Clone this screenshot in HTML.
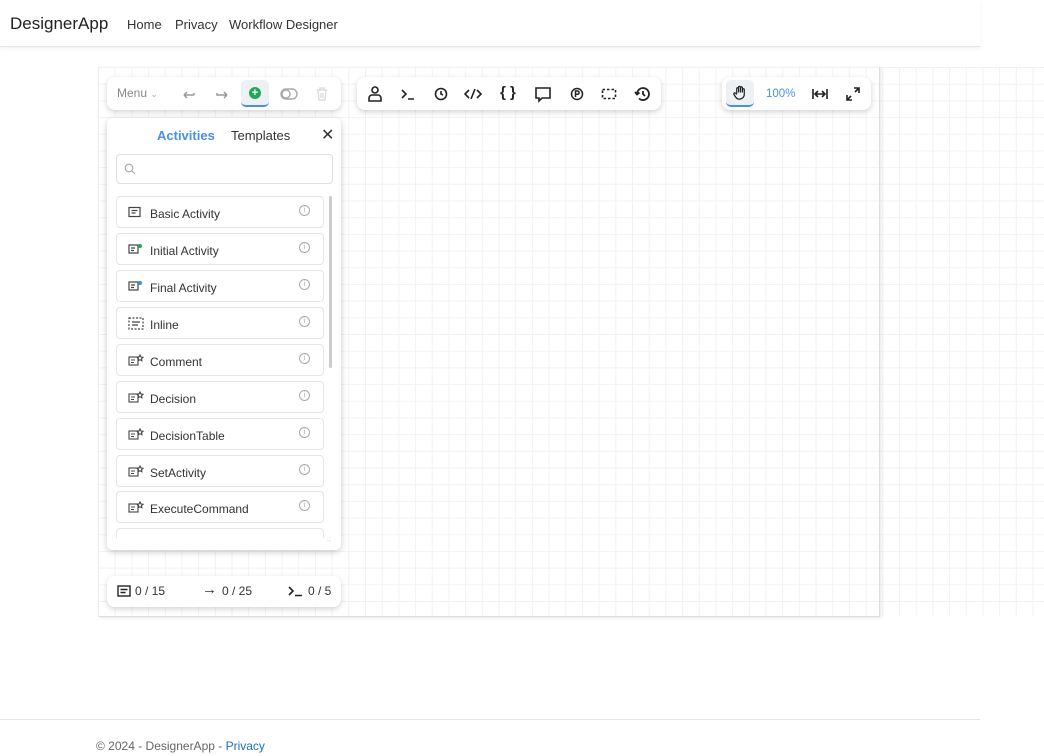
<!DOCTYPE html>
<html><head><meta charset="utf-8"><style>
*{box-sizing:border-box;margin:0;padding:0}
body{width:1044px;height:756px;overflow:hidden;background:#fff;font-family:"Liberation Sans",sans-serif;color:#212529;position:relative}
.hdr{position:absolute;left:0;top:0;width:980px;height:47px;border-bottom:1px solid #e5e5e5;box-shadow:0 2px 4px rgba(0,0,0,.05)}
.brand{position:absolute;left:10px;top:14px;font-size:17px;color:#222}
.nav{position:absolute;top:17px;font-size:13px;color:#333}
.grid{position:absolute;left:98px;top:67px;width:946px;height:549px;
background-image:linear-gradient(to right,#f0f2f4 1px,transparent 1px),linear-gradient(to bottom,#f0f2f4 1px,transparent 1px);
background-size:16.7px 16.7px;background-position:0 0}
.canvas{position:absolute;left:98px;top:67px;width:782px;height:550px;border-right:1px solid #ddd;border-bottom:1px solid #ddd;border-left:1px solid #eee;box-shadow:1px 1px 3px rgba(0,0,0,.1)}
.bar{position:absolute;background:#fff;border-radius:8px;box-shadow:0 2px 6px rgba(0,0,0,.18)}
.ic{position:absolute;top:8px}
.panel{position:absolute;left:107px;top:118px;width:234px;height:432px;background:#fff;border-radius:6px;box-shadow:0 2px 7px rgba(0,0,0,.2)}
.item{position:absolute;left:9px;width:208px;height:32px;border:1px solid #e3e5e8;border-radius:4px;font-size:12px;color:#333}
.item span{position:absolute;left:33px;top:10px}
.item svg.a{position:absolute;left:11px;top:9px}
.item .i{position:absolute;right:13px;top:8px;width:11px;height:11px;border:1px solid #aaa;border-radius:50%;font-size:7px;color:#aaa;text-align:center;line-height:9px}
.foot{position:absolute;left:0;top:719px;width:980px;border-top:1px solid #e5e5e5}
</style></head><body>
<div class="hdr"><div class="brand">DesignerApp</div>
<div class="nav" style="left:127px">Home</div><div class="nav" style="left:175px">Privacy</div><div class="nav" style="left:229px">Workflow Designer</div></div>
<div class="grid"></div>
<div class="canvas"></div>

<div class="bar" style="left:107px;top:77px;width:234px;height:33px">
<div style="position:absolute;left:10px;top:9px;font-size:12px;color:#888">Menu <span style="font-size:9px;color:#aaa">&#8964;</span></div>
<svg class="ic" style="left:73px" width="18" height="18" viewBox="0 0 18 18" fill="none" stroke="#999" stroke-width="1.5"><path d="M4 10h10M4 10l3-3M4 10l3 3M14 10v-2"/></svg>
<svg class="ic" style="left:106px" width="18" height="18" viewBox="0 0 18 18" fill="none" stroke="#999" stroke-width="1.5"><path d="M4 8v2h10M14 10l-3-3M14 10l-3 3"/></svg>
<div style="position:absolute;left:134px;top:3px;width:28px;height:27px;background:#eef1f3;border-radius:5px;border-bottom:2px solid #4a90e2"></div>
<div style="position:absolute;left:142px;top:10px;width:12px;height:12px;border-radius:50%;background:#22a85a;color:#fff;font-size:11px;line-height:12px;text-align:center;font-weight:bold">+</div>
<svg class="ic" style="left:172px" width="20" height="18" viewBox="0 0 20 18" fill="none" stroke="#aaa" stroke-width="1.4"><rect x="2" y="4" width="16" height="10" rx="5"/><circle cx="7" cy="9" r="4"/></svg>
<svg class="ic" style="left:207px" width="16" height="18" viewBox="0 0 16 18" fill="none" stroke="#ddd" stroke-width="1.4"><path d="M3 5h10M6 5V3h4v2M4 5l1 10h6l1-10M7 8v5M9 8v5"/></svg>
</div>

<div class="bar" style="left:357px;top:77px;width:304px;height:33px">
<svg class="ic" style="left:9px" width="18" height="18" viewBox="0 0 18 18" fill="none" stroke="#222" stroke-width="1.6"><circle cx="9" cy="5" r="3"/><path d="M3 16v-3a3 3 0 0 1 3-3h6a3 3 0 0 1 3 3v3z"/></svg>
<svg class="ic" style="left:42px" width="18" height="18" viewBox="0 0 18 18" fill="none" stroke="#222" stroke-width="1.6"><path d="M3 5l4 4-4 4M9 14h6"/></svg>
<svg class="ic" style="left:75px" width="18" height="18" viewBox="0 0 18 18" fill="none" stroke="#222" stroke-width="1.6"><circle cx="9" cy="9" r="5.5"/><path d="M9 6v3l2 1"/></svg>
<svg class="ic" style="left:106px" width="20" height="18" viewBox="0 0 20 18" fill="none" stroke="#222" stroke-width="1.6"><path d="M6 5L2 9l4 4M14 5l4 4-4 4M12 4l-4 10"/></svg>
<div style="position:absolute;left:143px;top:7px;font-size:15px;font-weight:bold;color:#222">{ }</div>
<svg class="ic" style="left:177px" width="18" height="18" viewBox="0 0 18 18" fill="none" stroke="#222" stroke-width="1.6"><path d="M2 3h14v10H8l-3 3v-3H2z"/></svg>
<svg class="ic" style="left:211px" width="18" height="18" viewBox="0 0 18 18" fill="none" stroke="#222" stroke-width="1.5"><circle cx="9" cy="9" r="5.5"/><path d="M7.5 12V6h2a1.6 1.6 0 0 1 0 3.3h-2"/></svg>
<svg class="ic" style="left:243px" width="18" height="18" viewBox="0 0 18 18" fill="none" stroke="#222" stroke-width="1.6" stroke-dasharray="2.5 2"><rect x="2.5" y="4.5" width="13" height="9"/></svg>
<svg class="ic" style="left:276px" width="20" height="18" viewBox="0 0 20 18" fill="none" stroke="#222" stroke-width="1.8"><path d="M4 9a6 6 0 1 1 2 4.5M2 7l2 2.5 2.5-2M10 6v3l2 2"/></svg>
</div>

<div class="bar" style="left:722px;top:77px;width:149px;height:33px">
<div style="position:absolute;left:4px;top:3px;width:28px;height:27px;background:#eef1f3;border-radius:5px;border-bottom:2px solid #4a90e2"></div>
<svg class="ic" style="left:10px;top:7px" width="17" height="17" viewBox="0 0 18 18" fill="none" stroke="#222" stroke-width="1.3"><path d="M5 10V5a1 1 0 0 1 2 0v4M7 9V3.5a1 1 0 0 1 2 0V9M9 9V4a1 1 0 0 1 2 0v5M11 9V6a1 1 0 0 1 2 0v5a5 5 0 0 1-5 5h-1a4 4 0 0 1-3-2l-2-3a1 1 0 0 1 2-1l1 1"/></svg>
<div style="position:absolute;left:44px;top:11px;font-size:11.5px;color:#4a90e2">100%</div>
<svg class="ic" style="left:88px" width="20" height="18" viewBox="0 0 20 18" fill="none" stroke="#222" stroke-width="1.6"><path d="M3 4v10M17 4v10M5 9h10M8 6l-3 3 3 3M12 6l3 3-3 3"/></svg>
<svg class="ic" style="left:122px" width="18" height="18" viewBox="0 0 18 18" fill="none" stroke="#222" stroke-width="1.6"><path d="M10 3h5v5M15 3l-4 4M8 15H3v-5M3 15l4-4"/></svg>
</div>

<div class="panel">
<div style="position:absolute;left:50px;top:10px;font-size:13px;color:#4a90e2;font-weight:bold">Activities</div>
<div style="position:absolute;left:124px;top:10px;font-size:13px;color:#333">Templates</div>
<div style="position:absolute;left:214px;top:7px;font-size:16px;color:#333">✕</div>
<div style="position:absolute;left:9px;top:36px;width:217px;height:30px;border:1px solid #dcdfe3;border-radius:4px">
<svg style="position:absolute;left:7px;top:8px" width="12" height="12" viewBox="0 0 12 12" fill="none" stroke="#aaa" stroke-width="1.1"><circle cx="5" cy="5" r="3.8"/><path d="M8 8l3 3"/></svg></div>
<div style="position:absolute;left:222px;top:78px;width:3px;height:172px;background:#ccc;border-radius:2px"></div>
<div class="item" style="top:78px"><svg class="a" width="13" height="12" viewBox="0 0 13 12" fill="none" stroke="#444" stroke-width="1.2"><rect x="1" y="1.5" width="11" height="9"/><path d="M3.5 4.5h6M3.5 7h4"/></svg><span>Basic Activity</span><div class="i">i</div></div>
<div class="item" style="top:115px"><svg class="a" width="15" height="12" viewBox="0 0 15 12" fill="none" stroke="#444" stroke-width="1.2"><rect x="1" y="2" width="9" height="8"/><path d="M3 5h4M3 7.5h3"/><circle cx="12" cy="3" r="2" fill="#22a85a" stroke="none"/></svg><span>Initial Activity</span><div class="i">i</div></div>
<div class="item" style="top:152px"><svg class="a" width="15" height="12" viewBox="0 0 15 12" fill="none" stroke="#444" stroke-width="1.2"><rect x="1" y="2" width="9" height="8"/><path d="M3 5h4M3 7.5h3"/><circle cx="12" cy="3" r="2" fill="#3b8fd9" stroke="none"/></svg><span>Final Activity</span><div class="i">i</div></div>
<div class="item" style="top:189px"><svg class="a" width="16" height="13" viewBox="0 0 16 13" fill="none" stroke="#444" stroke-width="1.2" ><rect x="1" y="1" width="14" height="11" stroke-dasharray="2 1.5"/><path d="M4 5h8M4 8h6"/></svg><span>Inline</span><div class="i">i</div></div>
<div class="item" style="top:226px"><svg class="a" width="16" height="13" viewBox="0 0 16 13" fill="none" stroke="#444" stroke-width="1.1"><rect x="1" y="3" width="9" height="8"/><path d="M3 6h4M3 8.5h3M12 1l1 2 2 .3-1.5 1.4.4 2-1.9-1-1.9 1 .4-2L9 3.3l2-.3z"/></svg><span>Comment</span><div class="i">i</div></div>
<div class="item" style="top:263px"><svg class="a" width="16" height="13" viewBox="0 0 16 13" fill="none" stroke="#444" stroke-width="1.1"><rect x="1" y="3" width="9" height="8"/><path d="M3 6h4M3 8.5h3M12 1l1 2 2 .3-1.5 1.4.4 2-1.9-1-1.9 1 .4-2L9 3.3l2-.3z"/></svg><span>Decision</span><div class="i">i</div></div>
<div class="item" style="top:300px"><svg class="a" width="16" height="13" viewBox="0 0 16 13" fill="none" stroke="#444" stroke-width="1.1"><rect x="1" y="3" width="9" height="8"/><path d="M3 6h4M3 8.5h3M12 1l1 2 2 .3-1.5 1.4.4 2-1.9-1-1.9 1 .4-2L9 3.3l2-.3z"/></svg><span>DecisionTable</span><div class="i">i</div></div>
<div class="item" style="top:337px"><svg class="a" width="16" height="13" viewBox="0 0 16 13" fill="none" stroke="#444" stroke-width="1.1"><rect x="1" y="3" width="9" height="8"/><path d="M3 6h4M3 8.5h3M12 1l1 2 2 .3-1.5 1.4.4 2-1.9-1-1.9 1 .4-2L9 3.3l2-.3z"/></svg><span>SetActivity</span><div class="i">i</div></div>
<div class="item" style="top:373px"><svg class="a" width="16" height="13" viewBox="0 0 16 13" fill="none" stroke="#444" stroke-width="1.1"><rect x="1" y="3" width="9" height="8"/><path d="M3 6h4M3 8.5h3M12 1l1 2 2 .3-1.5 1.4.4 2-1.9-1-1.9 1 .4-2L9 3.3l2-.3z"/></svg><span>ExecuteCommand</span><div class="i">i</div></div>
<div style="position:absolute;left:9px;top:410px;width:208px;height:10px;border:1px solid #e3e5e8;border-bottom:none;border-radius:4px 4px 0 0"></div>
<div style="position:absolute;left:220px;top:418px;font-size:7px;color:#bbb">.:</div>
</div>

<div class="bar" style="left:107px;top:576px;width:234px;height:31px;font-size:12px;color:#333">
<svg style="position:absolute;left:10px;top:9px" width="14" height="12" viewBox="0 0 14 12" fill="none" stroke="#222" stroke-width="1.4"><rect x="1" y="1" width="12" height="10"/><path d="M3.5 4.5h7M3.5 7.5h5"/></svg>
<div style="position:absolute;left:28px;top:8px">0 / 15</div>
<div style="position:absolute;left:95px;top:5px;font-size:15px;font-weight:bold">→</div>
<div style="position:absolute;left:115px;top:8px">0 / 25</div>
<svg style="position:absolute;left:180px;top:9px" width="16" height="12" viewBox="0 0 16 12" fill="none" stroke="#222" stroke-width="1.6"><path d="M2 2l4 4-4 4M8 10.5h7"/></svg>
<div style="position:absolute;left:201px;top:8px">0 / 5</div>
</div>

<div class="foot"></div>
<div style="position:absolute;left:96px;top:739px;font-size:12px;color:#666">© 2024 - DesignerApp - <span style="color:#1b6ec2">Privacy</span></div>
</body></html>
